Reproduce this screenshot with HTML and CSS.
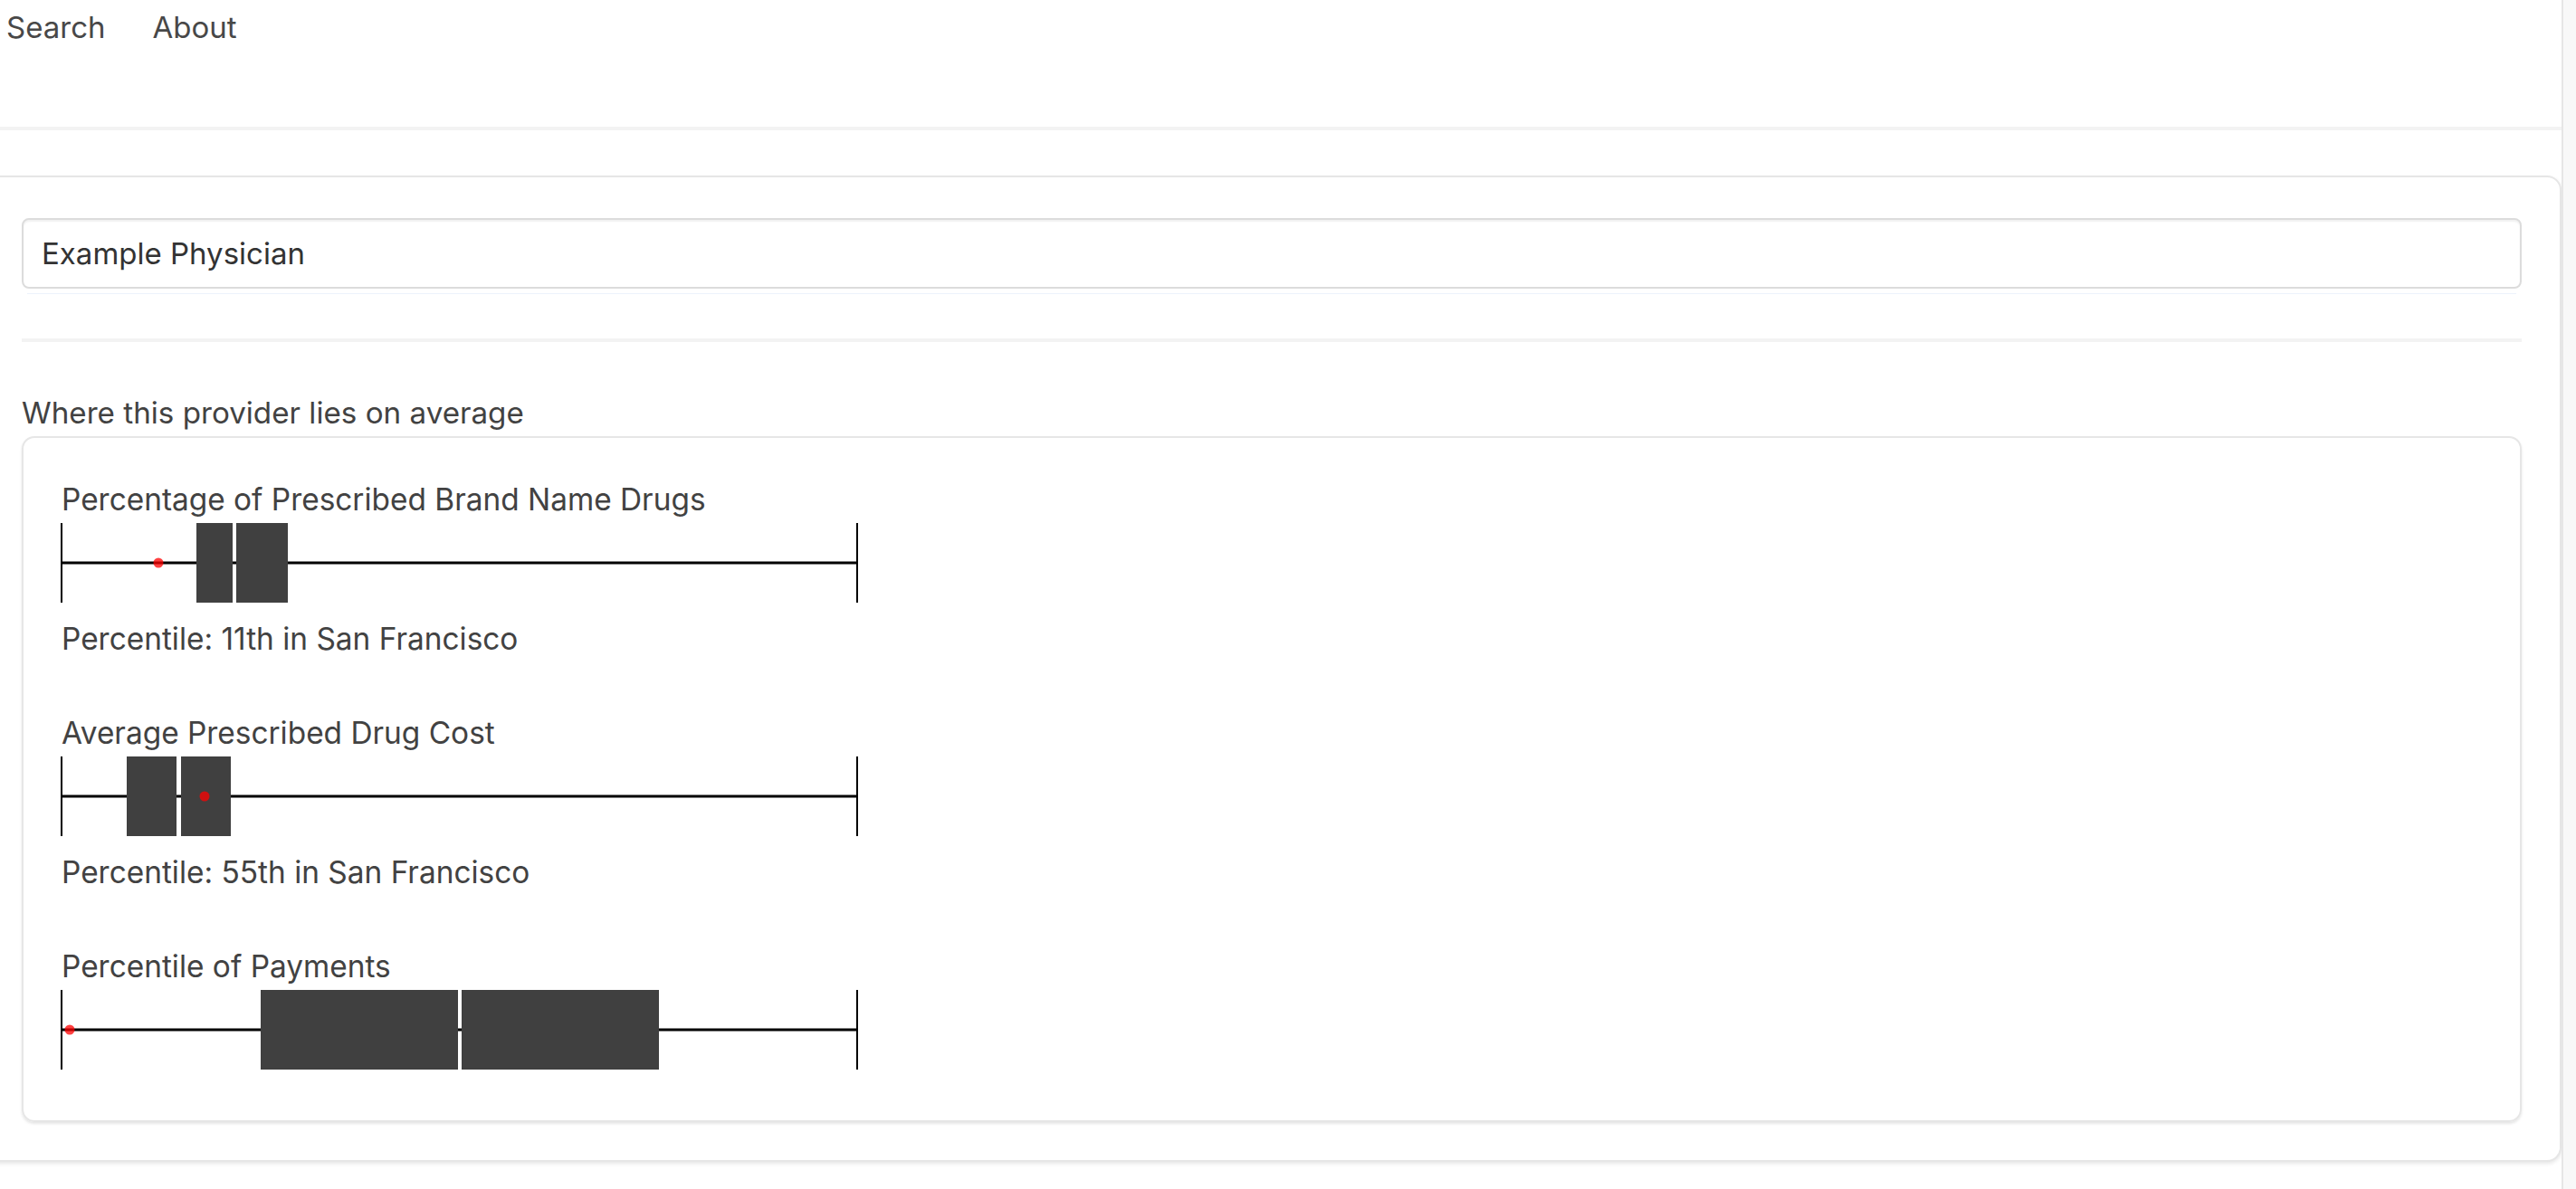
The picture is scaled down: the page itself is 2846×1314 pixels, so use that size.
FILE: index.html
```html
<!DOCTYPE html>
<html lang="en">
<head>
<meta charset="utf-8">
<title>Provider</title>
<link rel="stylesheet" href="styles.css">
</head>
<body>
<div class="page">
  <div class="main">
    <nav class="nav">
      <a class="nav-link" href="#">Search</a>
      <a class="nav-link" href="#">About</a>
    </nav>
    <section class="card">
      <input class="search" type="text" value="Example Physician">
      <div class="focus-line"></div>
      <div class="divider"></div>
      <h2 class="section-title">Where this provider lies on average</h2>
      <div class="stats">
        <div class="stat">
          <div class="stat-label">Percentage of Prescribed Brand Name Drugs</div>
          <svg class="boxplot" width="882" height="88" viewBox="0 0 882 88">
            <line x1="1" y1="44" x2="880" y2="44" stroke="#000" stroke-width="3"/>
            <line x1="1" y1="0" x2="1" y2="88" stroke="#000" stroke-width="2"/>
            <line x1="880" y1="0" x2="880" y2="88" stroke="#000" stroke-width="2"/>
            <rect x="150" y="0" width="40" height="88" fill="#404040"/>
            <rect x="194" y="0" width="57" height="88" fill="#404040"/>
            <circle cx="108" cy="44" r="5.5" fill="#ff0000" fill-opacity="0.75"/>
          </svg>
          <div class="stat-percentile">Percentile: 11th in San Francisco</div>
        </div>
        <div class="stat">
          <div class="stat-label">Average Prescribed Drug Cost</div>
          <svg class="boxplot" width="882" height="88" viewBox="0 0 882 88">
            <line x1="1" y1="44" x2="880" y2="44" stroke="#000" stroke-width="3"/>
            <line x1="1" y1="0" x2="1" y2="88" stroke="#000" stroke-width="2"/>
            <line x1="880" y1="0" x2="880" y2="88" stroke="#000" stroke-width="2"/>
            <rect x="73" y="0" width="55" height="88" fill="#404040"/>
            <rect x="133" y="0" width="55" height="88" fill="#404040"/>
            <circle cx="159" cy="44" r="5.5" fill="#ff0000" fill-opacity="0.75"/>
          </svg>
          <div class="stat-percentile">Percentile: 55th in San Francisco</div>
        </div>
        <div class="stat">
          <div class="stat-label">Percentile of Payments</div>
          <svg class="boxplot" width="882" height="88" viewBox="0 0 882 88">
            <line x1="1" y1="44" x2="880" y2="44" stroke="#000" stroke-width="3"/>
            <line x1="1" y1="0" x2="1" y2="88" stroke="#000" stroke-width="2"/>
            <line x1="880" y1="0" x2="880" y2="88" stroke="#000" stroke-width="2"/>
            <rect x="221" y="0" width="218" height="88" fill="#404040"/>
            <rect x="443" y="0" width="218" height="88" fill="#404040"/>
            <circle cx="10" cy="44" r="5.5" fill="#ff0000" fill-opacity="0.75"/>
          </svg>
        </div>
      </div>
    </section>
  </div>
  <div class="scrollbar"></div>
</div>
</body>
</html>
```

FILE: styles.css
```css
html, body {
  margin: 0;
  padding: 0;
  background: #ffffff;
}

body {
  font-family: Inter, "Open Sans", "Liberation Sans", sans-serif;
  font-size: 33.4px;
  line-height: 48px;
  color: #424242;
  overflow: hidden;
}

.page {
  display: flex;
  width: 2846px;
  height: 1314px;
}

.main {
  width: 2830px;
  flex: none;
  overflow: hidden;
}

.scrollbar {
  flex: 1;
  background: #f8f8f8;
  border-left: 2px solid #e6e6e6;
}

.nav {
  display: flex;
  gap: 52px;
  height: 134px;
  padding: 6px 0 0 7px;
  border-bottom: 4px solid #f3f3f3;
}

.nav-link {
  color: #484848;
  text-decoration: none;
  font-size: 33px;
  line-height: 49px;
}

.card {
  margin: 50px 0 0 -20px;
  padding: 45px 42px 42px 42px;
  border: 2px solid #e6e6e6;
  border-radius: 16px;
  background: #ffffff;
  box-shadow: 0 2px 4px rgba(0, 0, 0, 0.10);
}

.search {
  display: block;
  box-sizing: border-box;
  width: 100%;
  height: 78px;
  margin: 0;
  padding: 0 20px;
  border: 2px solid #dcdcdc;
  border-radius: 8px;
  box-shadow: inset 0 2px 2px rgba(0, 0, 0, 0.06);
  font-family: Inter, "Open Sans", "Liberation Sans", sans-serif;
  font-size: 33px;
  color: #333333;
  background: #ffffff;
  outline: none;
}

.focus-line {
  height: 1px;
  margin: 5px 6px 0 6px;
  background: #edf2fb;
}

.divider {
  height: 4px;
  margin-top: 49px;
  background: #f3f3f3;
}

.section-title {
  margin: 54px 0 0 0;
  font-size: 33.2px;
  line-height: 48px;
  font-weight: 400;
  color: #424242;
}

.stats {
  margin-top: 2px;
  padding: 44px 42px 56px 42px;
  border: 2px solid #e6e6e6;
  border-radius: 14px;
  box-shadow: 0 2px 3px rgba(0, 0, 0, 0.10);
}

.stat + .stat {
  margin-top: 56px;
}

.stat-label {
  line-height: 48px;
}

.boxplot {
  display: block;
  margin: 2px 0 0 -1px;
}

.stat-percentile {
  margin-top: 16px;
  line-height: 48px;
}
```
